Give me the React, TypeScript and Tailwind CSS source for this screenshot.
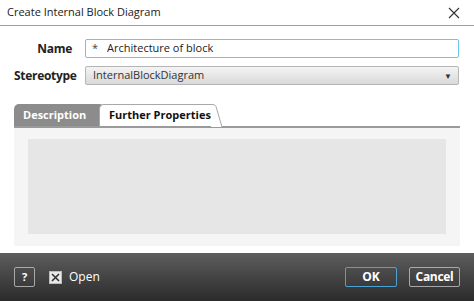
import React, { useState } from "react";

const font = { fontFamily: "'Open Sans', 'Noto Sans', sans-serif" };

const App = () => {
  const [name, setName] = useState("Architecture of block");
  const [open, setOpen] = useState(true);

  return (
    <div className="w-[474px] h-[301px] bg-white flex flex-col overflow-hidden" style={font}>
      {/* title bar */}
      <div className="h-[26px] flex items-center justify-between pl-[7px] pr-[14px] border-b border-[#a0a0a0]">
        <span className="text-[11px] text-[#1a1a1a]">Create Internal Block Diagram</span>
        <svg width="12" height="12" viewBox="0 0 12 12" className="text-[#333]">
          <path d="M1 1 L11 11 M11 1 L1 11" stroke="currentColor" strokeWidth="1.1" />
        </svg>
      </div>

      {/* form */}
      <div className="flex flex-col gap-[8px] pt-[13px] pl-[14px] pr-[15px]">
        <div className="flex items-center">
          <label className="w-[58px] text-right text-[12px] font-bold text-[#222] tracking-[-0.3px]">Name</label>
          <div className="ml-[13px] flex-1 h-[19px] border border-[#6ec3e6] rounded-[2px] flex items-center px-[6px] text-[11px] text-[#222]">
            <span className="text-[11px] mr-[9px] text-[#444]">*</span>
            <input
              value={name}
              onChange={(e) => setName(e.target.value)}
              className="flex-1 outline-none bg-transparent"
            />
          </div>
        </div>
        <div className="flex items-center">
          <label className="w-[58px] text-right text-[12px] font-bold text-[#222] tracking-[-0.3px]">Stereotype</label>
          <div className="ml-[13px] flex-1 h-[19px] border border-[#b5b5b5] rounded-[2px] bg-gradient-to-b from-[#f4f4f4] to-[#d9d9d9] flex items-center justify-between pl-[7px] pr-[6px] text-[11px] text-[#333]">
            <span>InternalBlockDiagram</span>
            <span className="text-[8px] text-[#333]">▼</span>
          </div>
        </div>
      </div>

      {/* tabs */}
      <div className="mt-[19px] px-[14px] flex flex-col">
        <div className="flex items-end h-[22px]">
          <div className="relative h-[22px] w-[86px] bg-[#8c8c8c] rounded-tl-[5px] flex items-center pl-[9px] text-[11px] font-bold text-white">
            Description
            <svg className="absolute right-[-8px] top-0" width="10" height="22" viewBox="0 0 10 22">
              <path d="M0 0 L2 0 Q4 0 5 2 L10 22 L0 22 Z" fill="#8c8c8c" />
            </svg>
          </div>
          <div className="relative h-[22px] w-[114px] -ml-[1px] bg-white border-t border-l border-[#a8a8a8] rounded-tl-[5px] flex items-center pl-[9px] text-[11px] font-bold text-[#111]">
            Further Properties
            <svg className="absolute right-[-10px] top-[-1px]" width="12" height="23" viewBox="0 0 12 23">
              <path d="M0 0.5 L2 0.5 Q4 0.5 5 2.5 L11 23 L0 23 Z" fill="#fff" />
              <path d="M0 0.5 L2 0.5 Q4 0.5 5 2.5 L11 23" fill="none" stroke="#a8a8a8" />
            </svg>
          </div>
        </div>
        <div className="h-[120px] bg-[#f5f5f5] border-t-2 border-[#9a9a9a] px-[14px] pt-[11px] pb-[12px]">
          <div className="h-full bg-[#e6e6e6]" />
        </div>
      </div>

      {/* footer */}
      <div className="mt-auto h-[48px] bg-gradient-to-b from-[#5e5e5e] to-[#2b2b2b] flex items-center px-[14px]">
        <button className="w-[21px] h-[20px] border border-[#a8a8a8] rounded-[2px] text-[11px] font-bold text-white flex items-center justify-center">
          ?
        </button>
        <button onClick={() => setOpen(!open)} className="ml-[14px] flex items-center gap-[7px] text-[12px] text-white">
          <span className="w-[13px] h-[13px] bg-[#e8e8e8] border border-[#bdbdbd] flex items-center justify-center">
            {open && (
              <svg width="9" height="9" viewBox="0 0 9 9">
                <path d="M1 1 L8 8 M8 1 L1 8" stroke="#333" strokeWidth="1.6" />
              </svg>
            )}
          </span>
          Open
        </button>
        <div className="ml-auto flex gap-[12px]">
          <button className="w-[52px] h-[20px] border border-[#4aa3d8] rounded-[2px] text-[12px] font-bold text-white flex items-center justify-center">
            OK
          </button>
          <button className="w-[51px] h-[20px] border border-[#a8a8a8] rounded-[2px] text-[12px] font-bold text-white flex items-center justify-center tracking-[-0.3px]">
            Cancel
          </button>
        </div>
      </div>
    </div>
  );
};

export default App;
